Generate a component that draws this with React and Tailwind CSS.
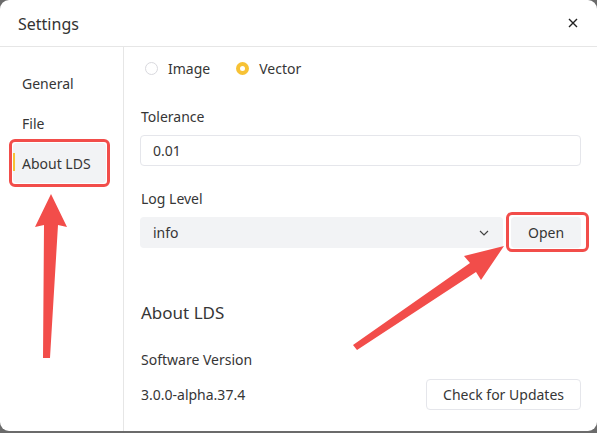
import React from 'react';

const font = { fontFamily: '"Noto Sans", "Liberation Sans", sans-serif' };

function Arrows() {
  return (
    <svg className="absolute inset-0 pointer-events-none" width="597" height="433" viewBox="0 0 597 433">
      <polygon
        fill="#f24d4a"
        points="51,194 67,227 58,225 50,358 43,358 44,225 35,227"
      />
      <polygon
        fill="#f24d4a"
        points="504,246 481,280 476,272 357,350 353,345 470,263 464,256"
      />
    </svg>
  );
}

export default function App() {
  return (
    <div className="relative w-[597px] h-[433px] bg-[#6b6b6b] overflow-hidden text-[#363636]" style={font}>
      <div className="w-full h-[431px] bg-white rounded-[9px] flex flex-col">
        <div className="h-[47px] shrink-0 flex items-center justify-between pl-[18px] pr-[19px] border-b border-[#e6e6e6]">
          <span className="text-[16px] text-[#333] pt-[1px]">Settings</span>
          <svg width="10" height="10" viewBox="0 0 10 10">
            <path d="M1 1 L9 9 M9 1 L1 9" stroke="#222" strokeWidth="1.4" />
          </svg>
        </div>

        <div className="flex flex-1">
          <div className="w-[124px] shrink-0 border-r border-[#e6e6e6] pt-[16px] pl-[13px] pr-[17px] text-[14px]">
            <div className="h-[40px] flex items-center px-[9px]">General</div>
            <div className="h-[40px] flex items-center px-[9px]">File</div>
            <div className="relative h-[40px] flex items-center px-[9px] bg-[#f2f3f5] rounded-[4px]">
              <div className="absolute left-0 top-[10px] w-[2px] h-[18px] bg-[#f7c235]" />
              About LDS
              <div className="absolute -inset-[4px] border-[3px] border-[#f24d4a] rounded-[6px]" />
            </div>
          </div>

          <div className="flex-1 pl-[16px] pr-[16px] pt-[11px] text-[14px]">
            <div className="h-[20px] flex items-center gap-[26px] pl-[5px]">
              <div className="flex items-center gap-[10px]">
                <span className="w-[13px] h-[13px] rounded-full border border-[#d9d9de] bg-white" />
                <span>Image</span>
              </div>
              <div className="flex items-center gap-[10px]">
                <span className="w-[13px] h-[13px] rounded-full bg-[#f7c235] flex items-center justify-center">
                  <span className="w-[5px] h-[5px] rounded-full bg-white" />
                </span>
                <span>Vector</span>
              </div>
            </div>

            <div className="mt-[28px] h-[20px] flex items-center pl-[1px]">Tolerance</div>
            <div className="mt-[9px] h-[31px] border border-[#e5e6eb] rounded-[4px] flex items-center px-[12px]">0.01</div>

            <div className="mt-[22px] h-[20px] flex items-center pl-[1px]">Log Level</div>
            <div className="mt-[9px] flex gap-[8px]">
              <div className="flex-1 h-[31px] bg-[#f2f3f5] rounded-[4px] flex items-center justify-between pl-[13px] pr-[14px]">
                <span>info</span>
                <svg width="10" height="6" viewBox="0 0 10 6">
                  <path d="M1 1 L5 5 L9 1" stroke="#444" strokeWidth="1.2" fill="none" />
                </svg>
              </div>
              <div className="relative w-[70px] h-[31px] bg-[#f2f3f5] rounded-[4px] flex items-center justify-center">
                Open
                <div className="absolute -left-[5px] -right-[8px] -top-[5px] -bottom-[4px] border-[3px] border-[#f24d4a] rounded-[6px]" />
              </div>
            </div>

            <div className="mt-[53px] h-[24px] flex items-center text-[17px] pl-[1px]">About LDS</div>
            <div className="mt-[24px] h-[20px] flex items-center pl-[1px]">Software Version</div>
            <div className="mt-[10px] flex items-center justify-between">
              <span className="pl-[1px]">3.0.0-alpha.37.4</span>
              <div className="h-[31px] px-[16px] border border-[#e5e6eb] rounded-[4px] flex items-center">Check for Updates</div>
            </div>
          </div>
        </div>
      </div>
      <Arrows />
    </div>
  );
}
